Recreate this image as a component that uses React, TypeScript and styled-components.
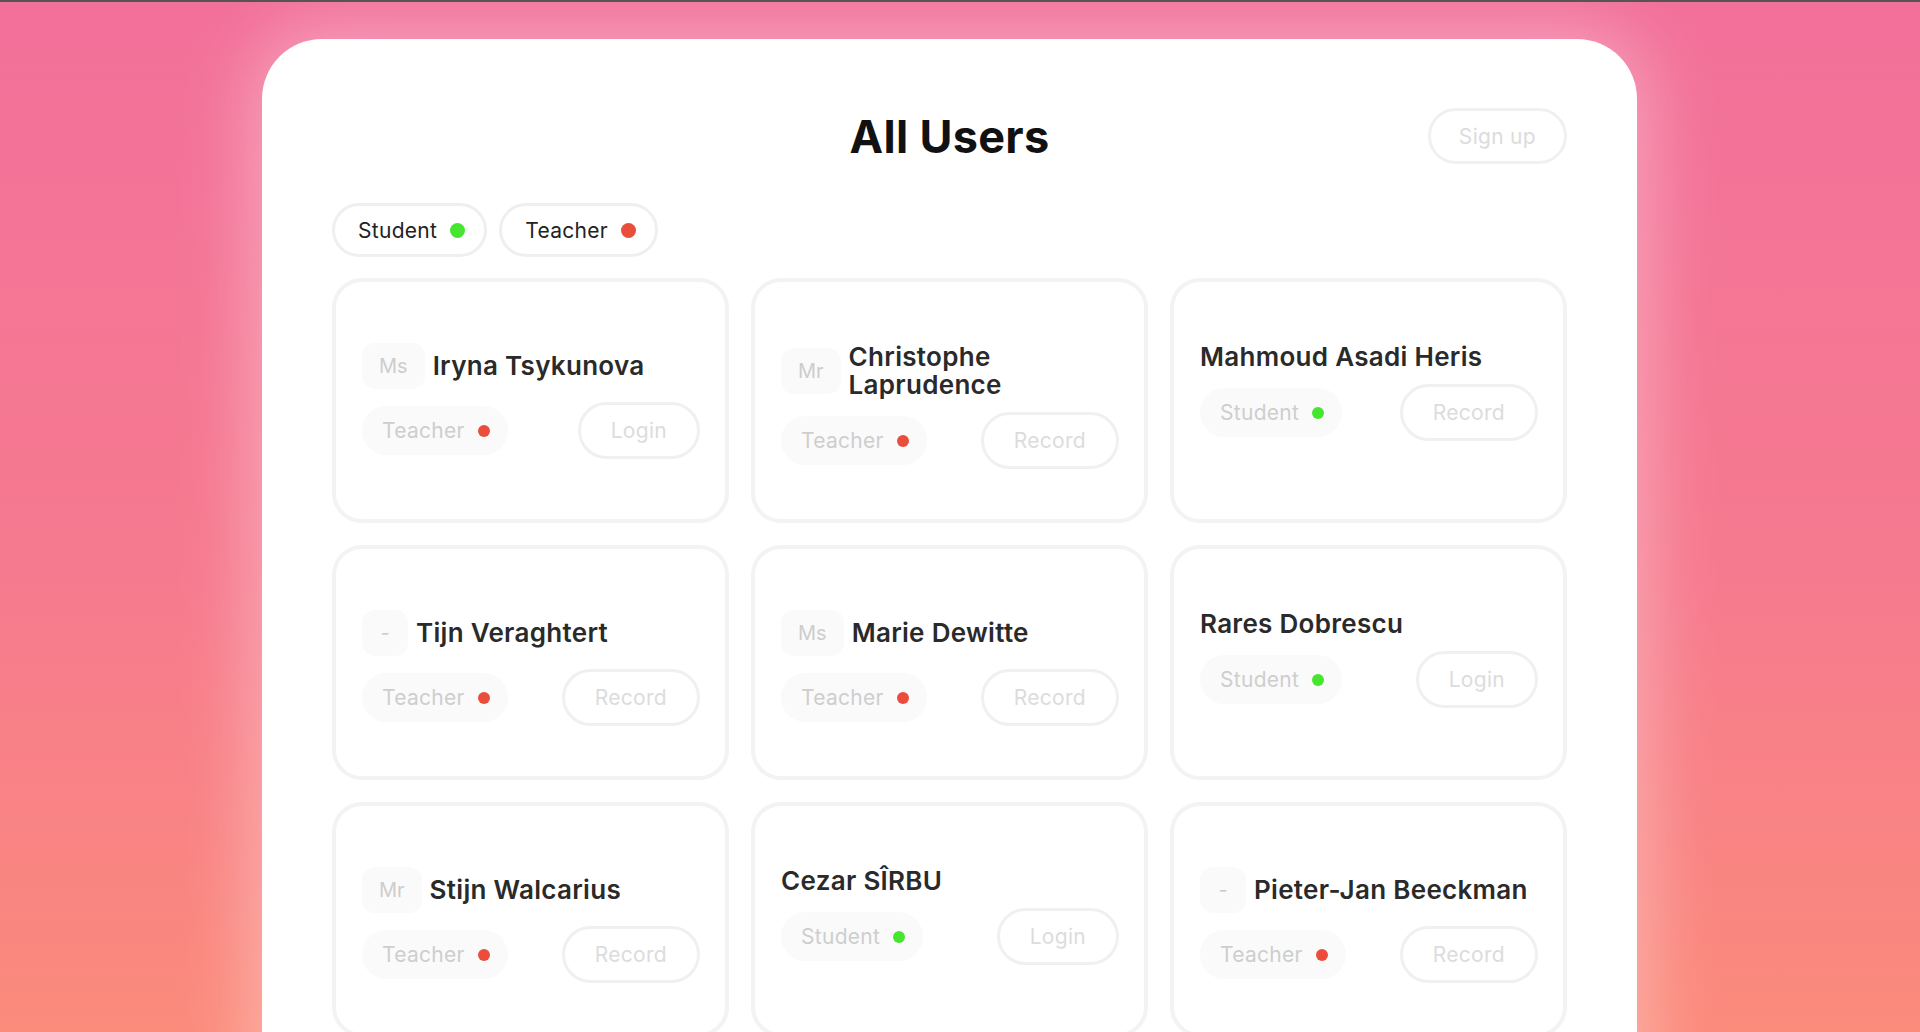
import styled, { createGlobalStyle } from 'styled-components';

const GlobalStyle = createGlobalStyle`
    html {
        background: linear-gradient(180deg, #f2709b 0%, #f67a8f 55%, #fb8b7b 100%) fixed;
        border-top: 2px solid #555;
    }
    body {
        margin: 0;
        font-family: Inter, 'Open Sans', sans-serif;
    }
`;

// right padding stands in for the scrollbar gutter of the original page
const Page = styled.div`
    padding: 37px 21px 39px 0;
`;

const Panel = styled.main`
    width: 1375px;
    margin: 0 auto;
    box-sizing: border-box;
    padding: 69px 70px 70px;
    background: #fff;
    border-radius: 60px;
    box-shadow: 0 0 70px 12px rgba(255, 255, 255, 0.35);
`;

const Header = styled.header`
    display: grid;
    grid-template-columns: 1fr auto 1fr;
    align-items: center;
`;

const Title = styled.h1`
    grid-column: 2;
    margin: 0;
    font-size: 45px;
    font-weight: 700;
    color: #111;
    letter-spacing: 0.3px;
`;

const OutlineButton = styled.button`
    font-family: inherit;
    background: #fff;
    border: 3px solid #f0f0f0;
    border-radius: 999px;
    color: #dcdcdc;
    font-size: 21px;
    letter-spacing: 0.3px;
    height: ${(p) => (p.$tall ? 56 : 57)}px;
    padding: 0 ${(p) => (p.$tall ? 28 : 30)}px;
    cursor: pointer;
`;

const SignUp = styled(OutlineButton)`
    justify-self: end;
`;

const Filters = styled.div`
    display: flex;
    gap: 12px;
    margin-top: 39px;
`;

const FilterChip = styled.button`
    display: flex;
    align-items: center;
    gap: 13px;
    height: 54px;
    padding: 0 19px 0 23px;
    background: #fff;
    border: 3px solid #efefef;
    border-radius: 999px;
    font-family: inherit;
    font-size: 21px;
    letter-spacing: 0.3px;
    color: #222;
`;

const Dot = styled.span`
    width: ${(p) => p.$size}px;
    height: ${(p) => p.$size}px;
    border-radius: 50%;
    background: ${(p) => (p.$role === 'Student' ? '#46e52f' : '#ea4d3b')};
`;

const Grid = styled.section`
    display: grid;
    grid-template-columns: repeat(3, 1fr);
    gap: 22px;
    margin-top: 21px;
`;

const Card = styled.article`
    display: flex;
    flex-direction: column;
    gap: 13px;
    padding: 61px 25px 50px 26px;
    border: 4px solid #f3f3f3;
    border-radius: 30px;
    background: #fff;
`;

const NameRow = styled.div`
    display: flex;
    align-items: center;
    gap: 8px;
`;

const Honorific = styled.span`
    flex: none;
    display: flex;
    align-items: center;
    justify-content: center;
    height: 46px;
    min-width: 46px;
    box-sizing: border-box;
    padding: 0 17px;
    border-radius: 13px;
    background: #fafafa;
    color: #cdcdcd;
    font-size: 20px;
`;

const Name = styled.h2`
    margin: 0;
    font-size: 26px;
    font-weight: 600;
    letter-spacing: 0.3px;
    line-height: 28px;
    color: #2a2a2a;
`;

const Footer = styled.div`
    display: flex;
    align-items: center;
    justify-content: space-between;
`;

const RoleChip = styled.span`
    display: flex;
    align-items: center;
    gap: 13px;
    height: 49px;
    padding: 0 18px 0 20px;
    border-radius: 999px;
    background: #fafafa;
    color: #cecece;
    font-size: 21px;
    letter-spacing: 0.3px;
`;

type User = {
    title?: string;
    name: string;
    role: 'Student' | 'Teacher';
    action: 'Login' | 'Record';
};

const users: User[] = [
    { title: 'Ms', name: 'Iryna Tsykunova', role: 'Teacher', action: 'Login' },
    { title: 'Mr', name: 'Christophe Laprudence', role: 'Teacher', action: 'Record' },
    { name: 'Mahmoud Asadi Heris', role: 'Student', action: 'Record' },
    { title: '-', name: 'Tijn Veraghtert', role: 'Teacher', action: 'Record' },
    { title: 'Ms', name: 'Marie Dewitte', role: 'Teacher', action: 'Record' },
    { name: 'Rares Dobrescu', role: 'Student', action: 'Login' },
    { title: 'Mr', name: 'Stijn Walcarius', role: 'Teacher', action: 'Record' },
    { name: 'Cezar SÎRBU', role: 'Student', action: 'Login' },
    { title: '-', name: 'Pieter-Jan Beeckman', role: 'Teacher', action: 'Record' },
    { title: 'Ms', name: 'Lotte Vermeulen', role: 'Teacher', action: 'Record' },
    { name: 'Andrei Popescu', role: 'Student', action: 'Login' },
    { title: 'Mr', name: 'Koen Janssens', role: 'Teacher', action: 'Record' },
];

function UserCard({ user }: { user: User }) {
    return (
        <Card>
            <NameRow>
                {user.title && <Honorific>{user.title}</Honorific>}
                <Name>{user.name}</Name>
            </NameRow>
            <Footer>
                <RoleChip>
                    {user.role}
                    <Dot $size={12} $role={user.role} />
                </RoleChip>
                <OutlineButton>{user.action}</OutlineButton>
            </Footer>
        </Card>
    );
}

export default function App() {
    return (
        <Page>
            <GlobalStyle />
            <Panel>
                <Header>
                    <Title>All Users</Title>
                    <SignUp $tall>Sign up</SignUp>
                </Header>
                <Filters>
                    <FilterChip>
                        Student
                        <Dot $size={15} $role="Student" />
                    </FilterChip>
                    <FilterChip>
                        Teacher
                        <Dot $size={15} $role="Teacher" />
                    </FilterChip>
                </Filters>
                <Grid>
                    {users.map((u) => (
                        <UserCard key={u.name} user={u} />
                    ))}
                </Grid>
            </Panel>
        </Page>
    );
}
